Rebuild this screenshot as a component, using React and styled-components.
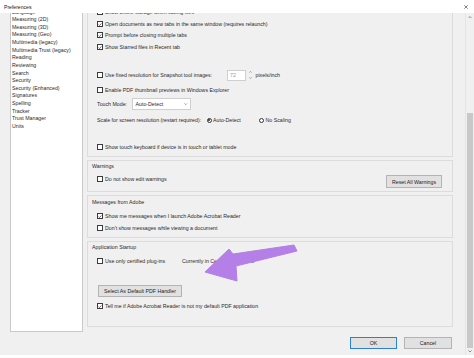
import React from "react";
import styled, { createGlobalStyle } from "styled-components";

const Global = createGlobalStyle`
  html, body { margin: 0; padding: 0; background: #fff; }
  * { box-sizing: border-box; }
`;

const Window = styled.div`
  position: relative;
  width: 474px;
  height: 358px;
  display: flex;
  flex-direction: column;
  overflow: hidden;
  background: #fff;
  font-family: "Liberation Sans", Arial, sans-serif;
  font-size: 5.25px;
  color: #2a2a2a;
`;

const TitleBar = styled.div`
  flex: none;
  height: 13px;
  display: flex;
  align-items: center;
  justify-content: space-between;
  padding: 0 6px 0 4px;
  background: #fff;
  color: #111;
  font-size: 5.1px;
`;

const Body = styled.div`
  flex: none;
  height: 342px;
  display: flex;
  background: #f0f0f0;
`;

const Viewport = styled.div`
  flex: 1;
  overflow: hidden;
  display: flex;
  flex-direction: column;
`;

/* the dialog is scrolled to its end: its first 6.5px sit above the viewport */
const Scrolled = styled.div`
  margin-top: -6.5px;
  display: flex;
  flex-direction: column;
`;

const MainRow = styled.div`
  height: 325.5px;
  display: flex;
  gap: 4px;
  padding-left: 10px;
`;

const ListBox = styled.div`
  width: 73px;
  background: #fff;
  border: 1px solid #c9c9c9;
  padding: 1px 0 0 1px;
`;

const ListItem = styled.div`
  height: 7.64px;
  line-height: 7.64px;
  white-space: nowrap;
`;

const Panel = styled.div`
  width: 366px;
  display: flex;
  flex-direction: column;
  gap: 3px;
`;

const Section = styled.div`
  display: flex;
  flex-direction: column;
  border: 1px solid #dcdcdc;
  padding: ${(p) => p.$pt}px 0 ${(p) => p.$pb}px 0;
`;

const SectionTitle = styled.div`
  height: 8px;
  line-height: 8px;
  padding-left: 4px;
  margin-top: ${(p) => p.$mt || 0}px;
`;

const Row = styled.div`
  display: flex;
  align-items: ${(p) => p.$align || "center"};
  height: ${(p) => p.$h || 8}px;
  margin-top: ${(p) => p.$mt || 0}px;
  padding-left: 9px;
  white-space: nowrap;
`;

const Field = styled.div`
  flex: none;
  display: flex;
  align-items: center;
  height: 8px;
  width: ${(p) => (p.$w ? `${p.$w}px` : "auto")};
`;

const Box = styled.span`
  flex: none;
  width: 6px;
  height: 6px;
  margin-right: 2px;
  border: 1px solid #3c3c3c;
  background: #fff;
  display: flex;
  align-items: center;
  justify-content: center;
`;

const Radio = styled.span`
  flex: none;
  width: 5px;
  height: 5px;
  margin-right: 1.5px;
  border-radius: 50%;
  border: 0.8px solid #333;
  background: #fff;
  display: flex;
  align-items: center;
  justify-content: center;
  &::after {
    content: "";
    display: ${(p) => (p.$on ? "block" : "none")};
    width: 2.4px;
    height: 2.4px;
    border-radius: 50%;
    background: #222;
  }
`;

const SpinBox = styled.div`
  flex: none;
  width: 18.5px;
  height: 11px;
  background: #fff;
  border: 1px solid #cfcfcf;
  color: #9a9a9a;
  display: flex;
  align-items: center;
  padding-left: 2px;
`;

const SpinArrows = styled.div`
  flex: none;
  width: 10px;
  height: 11px;
  display: flex;
  flex-direction: column;
  justify-content: space-between;
  align-items: center;
  padding: 1.5px 0;
`;

const Select = styled.div`
  flex: none;
  width: 59px;
  height: 12px;
  background: #fff;
  border: 1px solid #cfcfcf;
  display: flex;
  align-items: center;
  justify-content: space-between;
  padding: 0 2.5px 0 2.5px;
`;

const Button = styled.div`
  flex: none;
  width: ${(p) => p.$w}px;
  height: ${(p) => p.$h || 12}px;
  margin-left: ${(p) => (p.$auto ? "auto" : `${p.$ml || 0}px`)};
  margin-right: ${(p) => p.$mr || 0}px;
  background: #e1e1e1;
  border: 1px solid ${(p) => (p.$primary ? "#2f7fd0" : "#b4b4b4")};
  display: flex;
  align-items: center;
  justify-content: center;
  color: #222;
`;

const Footer = styled.div`
  height: 23px;
  display: flex;
  justify-content: flex-end;
  align-items: flex-start;
  gap: 7px;
  padding: 5px 13px 0 0;
`;

const ScrollBar = styled.div`
  flex: none;
  width: 9px;
  display: flex;
  flex-direction: column;
  background: #f0f0f0;
  border-left: 1px solid #e4e4e4;
`;

const ScrollArrow = styled.div`
  flex: none;
  height: ${(p) => p.$h}px;
  display: flex;
  align-items: center;
  justify-content: center;
`;

const Track = styled.div`
  flex: 1;
  display: flex;
  flex-direction: column;
  justify-content: flex-end;
`;

const Thumb = styled.div`
  height: 235px;
  margin: 0 1px 0 1px;
  background: #c8c8c8;
`;

const BottomStrip = styled.div`
  flex: none;
  height: 3px;
  background: #fff;
`;

const Overlay = styled.svg`
  position: absolute;
  left: 0;
  top: 0;
  pointer-events: none;
`;

const Check = ({ on }) => (
  <Box>
    {on && (
      <svg width="5" height="5" viewBox="0 0 5 5">
        <polyline points="0.7,2.6 1.9,3.8 4.3,1.1" fill="none" stroke="#222" strokeWidth="0.8" />
      </svg>
    )}
  </Box>
);

const CheckField = ({ on, w, children }) => (
  <Field $w={w}>
    <Check on={on} />
    {children}
  </Field>
);

const Chevron = ({ up, color = "#555", w = 4, h = 2.5 }) => (
  <svg width={w} height={h} viewBox="0 0 4 2.5">
    <polyline
      points={up ? "0.4,2.1 2,0.5 3.6,2.1" : "0.4,0.4 2,2 3.6,0.4"}
      fill="none"
      stroke={color}
      strokeWidth="0.7"
    />
  </svg>
);

const listItems = [
  "Language",
  "Measuring (2D)",
  "Measuring (3D)",
  "Measuring (Geo)",
  "Multimedia (legacy)",
  "Multimedia Trust (legacy)",
  "Reading",
  "Reviewing",
  "Search",
  "Security",
  "Security (Enhanced)",
  "Signatures",
  "Spelling",
  "Tracker",
  "Trust Manager",
  "Units",
];

export default function App() {
  return (
    <>
      <Global />
      <Window>
        <TitleBar>
          <span>Preferences</span>
          <svg width="4" height="4" viewBox="0 0 4 4">
            <path d="M0.3 0.3 L3.7 3.7 M3.7 0.3 L0.3 3.7" stroke="#333" strokeWidth="0.6" />
          </svg>
        </TitleBar>
        <Body>
          <Viewport>
            <Scrolled>
              <MainRow>
                <ListBox>
                  {listItems.map((t) => (
                    <ListItem key={t}>{t}</ListItem>
                  ))}
                </ListBox>
                <Panel>
                  <Section $pt={0} $pb={5}>
                    <Row>
                      <CheckField on>Show online storage when saving files</CheckField>
                    </Row>
                    <Row $mt={4.5}>
                      <CheckField on>Open documents as new tabs in the same window (requires relaunch)</CheckField>
                    </Row>
                    <Row $mt={3}>
                      <CheckField on>Prompt before closing multiple tabs</CheckField>
                    </Row>
                    <Row $mt={4}>
                      <CheckField on>Show Starred files in Recent tab</CheckField>
                    </Row>
                    <Row $mt={20}>
                      <CheckField w={130}>Use fixed resolution for Snapshot tool images:</CheckField>
                      <SpinBox>72</SpinBox>
                      <SpinArrows>
                        <Chevron up w={3} h={2} color="#666" />
                        <Chevron w={3} h={2} color="#666" />
                      </SpinArrows>
                      <span>pixels/inch</span>
                    </Row>
                    <Row $mt={7}>
                      <CheckField>Enable PDF thumbnail previews in Windows Explorer</CheckField>
                    </Row>
                    <Row $mt={4} $h={12}>
                      <Field $w={35}>Touch Mode:</Field>
                      <Select>
                        <span>Auto-Detect</span>
                        <Chevron color="#777" w={3.5} h={2.2} />
                      </Select>
                    </Row>
                    <Row $mt={6}>
                      <Field $w={109.5}>Scale for screen resolution (restart required):</Field>
                      <Field $w={52.5}>
                        <Radio $on />
                        Auto-Detect
                      </Field>
                      <Field>
                        <Radio />
                        No Scaling
                      </Field>
                    </Row>
                    <Row $mt={19}>
                      <CheckField>Show touch keyboard if device is in touch or tablet mode</CheckField>
                    </Row>
                  </Section>

                  <Section $pt={1} $pb={3}>
                    <SectionTitle>Warnings</SectionTitle>
                    <Row $mt={5} $h={13} $align="flex-start">
                      <CheckField>Do not show edit warnings</CheckField>
                      <Button $w={56} $h={13} $auto $mr={10}>
                        Reset All Warnings
                      </Button>
                    </Row>
                  </Section>

                  <Section $pt={2} $pb={5}>
                    <SectionTitle>Messages from Adobe</SectionTitle>
                    <Row $mt={6}>
                      <CheckField on>Show me messages when I launch Adobe Acrobat Reader</CheckField>
                    </Row>
                    <Row $mt={4}>
                      <CheckField>Don't show messages while viewing a document</CheckField>
                    </Row>
                  </Section>

                  <Section $pt={1} $pb={16}>
                    <SectionTitle>Application Startup</SectionTitle>
                    <Row $mt={6}>
                      <CheckField w={85}>Use only certified plug-ins</CheckField>
                      <span>Currently in Certified Mode: No</span>
                    </Row>
                    <Row $mt={20} $h={12}>
                      <Button $w={84} $ml={1}>
                        Select As Default PDF Handler
                      </Button>
                    </Row>
                    <Row $mt={5}>
                      <CheckField on>Tell me if Adobe Acrobat Reader is not my default PDF application</CheckField>
                    </Row>
                  </Section>
                </Panel>
              </MainRow>
              <Footer>
                <Button $w={47} $primary>
                  OK
                </Button>
                <Button $w={48}>Cancel</Button>
              </Footer>
            </Scrolled>
          </Viewport>
          <ScrollBar>
            <ScrollArrow $h={8}>
              <Chevron up w={4} h={2.5} color="#666" />
            </ScrollArrow>
            <Track>
              <Thumb />
            </Track>
            <ScrollArrow $h={7}>
              <Chevron w={4} h={2.5} color="#666" />
            </ScrollArrow>
          </ScrollBar>
        </Body>
        <BottomStrip />
        <Overlay width="474" height="358" viewBox="0 0 474 358">
          <polygon
            points="205,272 229,249 233,254 294,245 297,251 236,266 237,281"
            fill="#b47fe7"
            stroke="#b47fe7"
            strokeWidth="1"
            strokeLinejoin="round"
          />
        </Overlay>
      </Window>
    </>
  );
}
